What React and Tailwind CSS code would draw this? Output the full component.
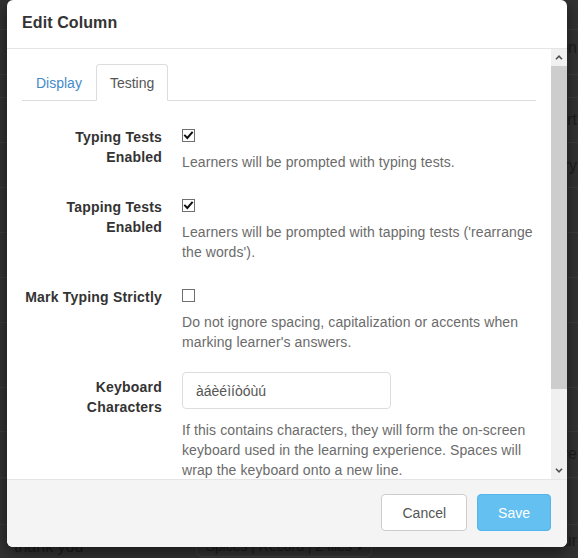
import React from "react";

function Checkbox({ checked }) {
  return (
    <svg width="13" height="13" viewBox="0 0 13 13" className="block">
      <rect x="0.5" y="0.5" width="12" height="12" fill="#fff" stroke="#6f6f6f" />
      {checked && (
        <path d="M3 6.6 L5.3 9 L10 3.6" fill="none" stroke="#111" strokeWidth="2" strokeLinecap="square" />
      )}
    </svg>
  );
}

function BgRow({ h, pt = 0, children, line = true }) {
  return (
    <div
      className={
        "relative shrink-0 flex " + (line ? "border-b border-[#3c3c3c]" : "")
      }
      style={{ height: h, paddingTop: pt }}
    >
      {children}
    </div>
  );
}

function Background() {
  const right = "ml-auto mr-[1px] text-[16px] leading-5 text-[#1c1c1c] whitespace-nowrap";
  return (
    <div className="flex flex-col w-[578px] h-[558px]">
      <BgRow h={30} />
      <BgRow h={45} pt={8}>
        <span className={right}>en</span>
      </BgRow>
      <BgRow h={23} />
      <BgRow h={45} pt={12}>
        <span className={right}>rt</span>
      </BgRow>
      <BgRow h={45} pt={13}>
        <span className={right}>ery</span>
      </BgRow>
      <BgRow h={45} />
      <BgRow h={45} />
      <BgRow h={45} />
      <BgRow h={65} />
      <BgRow h={44} />
      <BgRow h={46} pt={12}>
        <span className={right}>ve</span>
      </BgRow>
      <BgRow h={47} />
      <BgRow h={33} pt={12} line={false}>
        <div className="flex items-start w-full">
          <span className="ml-[14px] text-[16px] leading-5 text-[#1c1c1c] whitespace-nowrap">thank you</span>
          <span className="ml-[113px] mt-[-2px] h-[22px] px-[8px] flex items-center gap-[6px] rounded-[6px] border border-[#3e3e3e] text-[14px] text-[#1c1c1c] whitespace-nowrap">
            Spices | Record | 2 files ▾
          </span>
          <span className="ml-auto mr-[1px] mt-[-6px] text-[16px] leading-5 text-[#1c1c1c] whitespace-nowrap">hour</span>
        </div>
      </BgRow>
    </div>
  );
}

function Row({ label, checked, help, className = "" }) {
  return (
    <div className={"flex " + className}>
      <div className="w-[140px] shrink-0 text-right font-bold text-[#333] pt-[7px] tracking-[0.2px]">{label}</div>
      <div className="ml-[20px] flex-1 min-w-0">
        <div className="pt-[9px] h-[27px]">
          <Checkbox checked={checked} />
        </div>
        <p className="mt-[5px] text-[#6b6b6b] tracking-[0.1px]">{help}</p>
      </div>
    </div>
  );
}

function Chevron({ up }) {
  return (
    <svg width="8" height="5" viewBox="0 0 8 5">
      <path
        d={up ? "M1 4.2 L4 1.2 L7 4.2" : "M1 0.8 L4 3.8 L7 0.8"}
        fill="none"
        stroke="#505050"
        strokeWidth="1.6"
      />
    </svg>
  );
}

export default function App() {
  return (
    <div className="relative w-[578px] h-[558px] overflow-hidden bg-[#323232] font-['Liberation_Sans',Arial,sans-serif] text-[14px] leading-5">
      <Background />
      <div className="absolute left-[7px] top-0 w-[560px] h-[547px] bg-white rounded-[6px] flex flex-col overflow-hidden shadow-[0_5px_15px_rgba(0,0,0,0.5)]">
        <div className="h-[49px] shrink-0 border-b border-[#e5e5e5] px-[15px] flex items-center">
          <h4 className="text-[16px] font-bold text-[#333] leading-[18px] pb-[3px] tracking-[0.1px]">Edit Column</h4>
        </div>
        <div className="flex h-[430px] shrink-0">
          <div className="flex-1 min-w-0 overflow-hidden pl-[15px] pr-[15px] pt-[15px]">
            <div className="flex border-b border-[#ddd]">
              <div className="px-[13px] pt-[8px] pb-[7px] border border-transparent text-[#428bca] -mb-px">Display</div>
              <div className="px-[13px] pt-[8px] pb-[7px] border border-[#ddd] border-b-transparent bg-white rounded-t-[4px] text-[#555] -mb-px">
                Testing
              </div>
            </div>
            <div className="mt-[19px]">
              <Row
                label={<>Typing Tests<br />Enabled</>}
                checked
                help="Learners will be prompted with typing tests."
              />
              <Row
                className="mt-[18px]"
                label={<>Tapping Tests<br />Enabled</>}
                checked
                help="Learners will be prompted with tapping tests ('rearrange the words')."
              />
              <Row
                className="mt-[18px]"
                label="Mark Typing Strictly"
                checked={false}
                help="Do not ignore spacing, capitalization or accents when marking learner's answers."
              />
              <div className="flex mt-[20px]">
                <div className="w-[140px] shrink-0 text-right font-bold text-[#333] pt-[5px] tracking-[0.2px]">
                  Keyboard
                  <br />
                  Characters
                </div>
                <div className="ml-[20px] flex-1 min-w-0">
                  <div className="h-[37px] w-[209px] border border-[#ddd] rounded-[4px] px-[13px] flex items-center text-[#555]">
                    àáèéìíòóùú
                  </div>
                  <p className="mt-[11px] text-[#6b6b6b] tracking-[0.1px]">
                    If this contains characters, they will form the on-screen keyboard used in the learning experience. Spaces will wrap the keyboard onto a new line.
                  </p>
                </div>
              </div>
            </div>
          </div>
          <div className="w-[16px] shrink-0 flex flex-col bg-[#f0f0f0]">
            <div className="h-[17px] flex items-center justify-center">
              <Chevron up />
            </div>
            <div className="h-[323px] bg-[#cdcdcd]" />
            <div className="flex-1" />
            <div className="h-[17px] flex items-center justify-center">
              <Chevron />
            </div>
          </div>
        </div>
        <div className="flex-1 border-t border-[#e5e5e5] bg-[#f4f4f4] flex justify-end items-start pt-[14px] pr-[16px] gap-[10px]">
          <div className="h-[37px] px-[20px] flex items-center border border-[#ccc] bg-white rounded-[4px] text-[#555]">Cancel</div>
          <div className="h-[37px] px-[20px] flex items-center border border-[#52b6ea] bg-[#64c0f0] rounded-[4px] text-white">Save</div>
        </div>
      </div>
    </div>
  );
}
